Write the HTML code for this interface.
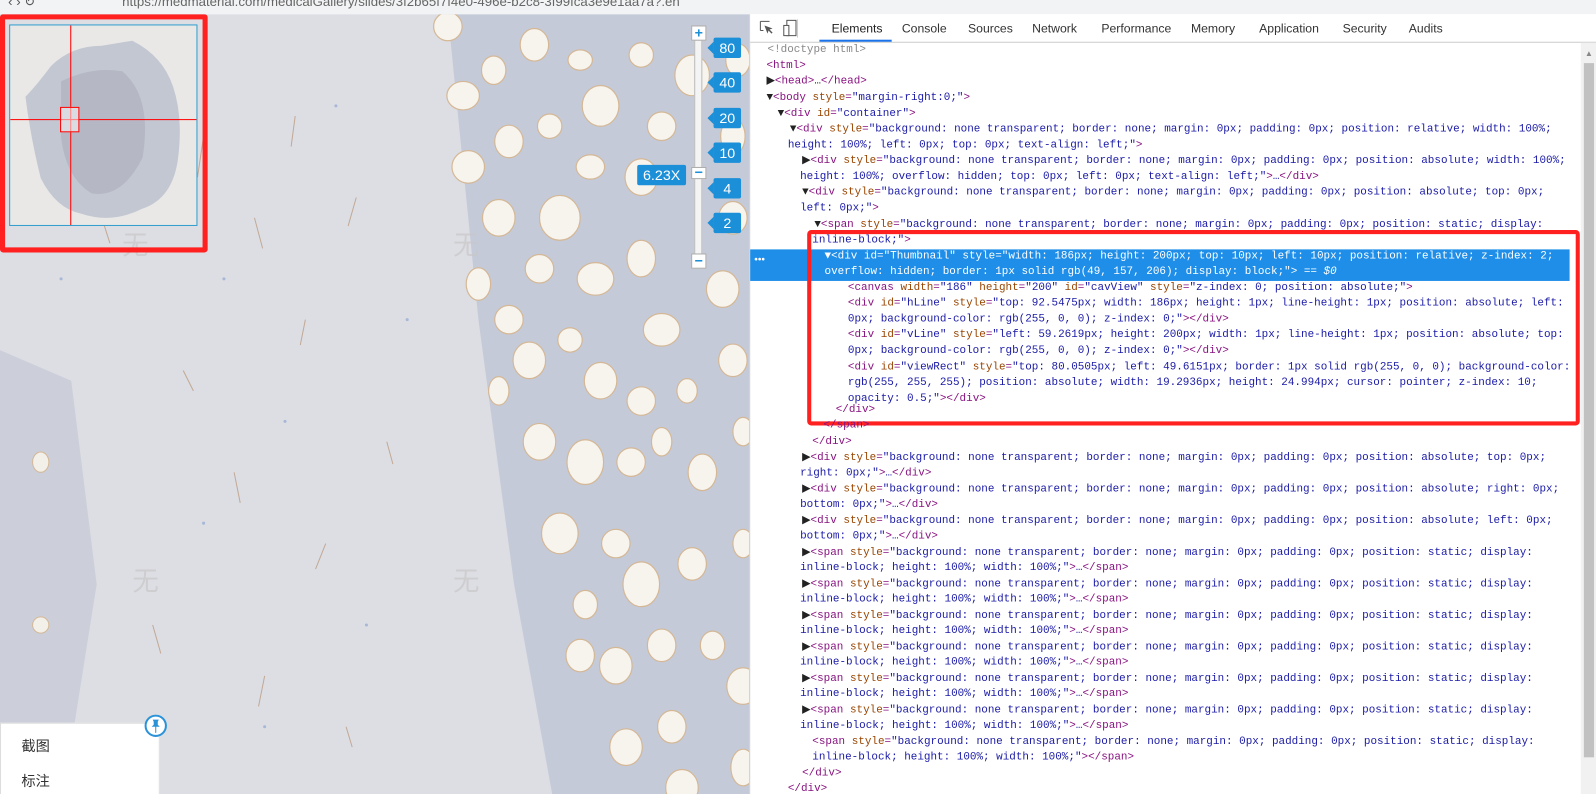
<!DOCTYPE html>
<html><head><meta charset="utf-8">
<style>
*{margin:0;padding:0;box-sizing:border-box}
html,body{width:1596px;height:794px;overflow:hidden}
body{position:relative;background:#fff;font-family:"Liberation Sans","Noto Sans CJK SC",sans-serif}
#wrap{position:absolute;left:0;top:0;width:1568px;height:780px;transform:scale(1.0179);transform-origin:0 0}
.top{position:absolute;left:0;top:0;width:1568px;height:14px;background:#f1f3f4;overflow:hidden}
.top span{position:absolute;top:-6px;font-size:13px;color:#555}
.view{position:absolute;left:0;top:14px;width:736px;height:780px;overflow:hidden;background:#e2e6ee}
.dev{position:absolute;left:736px;top:14px;width:832px;height:780px;background:#fff;border-left:1px solid #ccc}
.tb{position:absolute;left:0;top:0;width:832px;height:28px;border-bottom:1px solid #ccc;background:#fff}
.tab{position:absolute;top:7px;font-size:12px;color:#333}
.code{position:absolute;left:0;top:0;font-family:"Liberation Mono",monospace;font-size:10.75px;white-space:pre;color:#222}
.l{position:absolute;height:15px;line-height:15px}
.t{color:#881280}.a{color:#994500}.v{color:#1a1aa6}.p{color:#a894a6}.g{color:#888}
.sel{position:absolute;left:0;top:231px;width:805px;height:31px;background:#1e8ee9}
.lbl{position:absolute;background:#1b8fd8;color:#fff;font-size:14px;text-align:center;border-radius:2px;height:20px;line-height:20px}
.lbl:before{content:"";position:absolute;left:-6px;top:4px;border:6px solid transparent;border-left:0;border-right-color:#1b8fd8}
.btn{position:absolute;width:15px;height:15px;background:#fff;border:1px solid #aaa;color:#1b8fd8;font-size:14px;line-height:12px;text-align:center;font-weight:bold}
</style></head><body><div id="wrap">
<div class="top"><span style="left:8px">‹ › ↻</span><span style="left:120px;color:#666">https://medmaterial.com/medicalGallery/slides/3f2b65f7f4e0-496e-b2c8-3f99fca3e9e1aa7a?.en</span></div>
<div class="view">
<svg width="736" height="780" style="position:absolute;left:0;top:0">
<rect width="736" height="780" fill="#e0e5ee"/>
<path d="M440 0 L736 0 L736 780 L545 780 L505 560 L470 300 Z" fill="#c6cfe3"/>
<path d="M0 330 L70 360 L95 560 L60 780 L0 780Z" fill="#cdd4e4"/>
<rect x="0" y="0" width="736" height="780" fill="#c9ab8a" opacity=".1"/>
<g transform="translate(30,0)" fill="#f7f3ed" stroke="#d4b896" stroke-width="1.2">
<ellipse cx="410" cy="12" rx="14" ry="14"/><ellipse cx="425" cy="80" rx="16" ry="14"/>
<ellipse cx="455" cy="55" rx="12" ry="14"/><ellipse cx="495" cy="30" rx="14" ry="16"/><ellipse cx="540" cy="45" rx="12" ry="10"/>
<ellipse cx="560" cy="90" rx="18" ry="20"/><ellipse cx="510" cy="110" rx="12" ry="12"/><ellipse cx="600" cy="40" rx="12" ry="12"/>
<ellipse cx="650" cy="60" rx="17" ry="20"/><ellipse cx="620" cy="110" rx="14" ry="14"/><ellipse cx="695" cy="45" rx="12" ry="16"/>
<ellipse cx="470" cy="125" rx="14" ry="16"/><ellipse cx="430" cy="150" rx="16" ry="16"/>
<ellipse cx="550" cy="150" rx="14" ry="12"/><ellipse cx="600" cy="160" rx="16" ry="18"/><ellipse cx="690" cy="120" rx="12" ry="18"/>
<ellipse cx="460" cy="200" rx="16" ry="18"/><ellipse cx="520" cy="200" rx="20" ry="22"/><ellipse cx="500" cy="250" rx="14" ry="14"/>
<ellipse cx="440" cy="265" rx="12" ry="16"/><ellipse cx="470" cy="300" rx="14" ry="14"/>
<ellipse cx="555" cy="260" rx="18" ry="16"/><ellipse cx="600" cy="240" rx="14" ry="18"/><ellipse cx="620" cy="310" rx="18" ry="16"/>
<ellipse cx="680" cy="270" rx="16" ry="18"/><ellipse cx="690" cy="200" rx="14" ry="16"/><ellipse cx="460" cy="370" rx="10" ry="14"/>
<ellipse cx="490" cy="340" rx="16" ry="18"/><ellipse cx="530" cy="320" rx="12" ry="12"/><ellipse cx="560" cy="360" rx="16" ry="18"/>
<ellipse cx="600" cy="380" rx="14" ry="14"/><ellipse cx="645" cy="370" rx="10" ry="12"/><ellipse cx="690" cy="340" rx="14" ry="16"/>
<ellipse cx="500" cy="420" rx="16" ry="18"/><ellipse cx="545" cy="440" rx="18" ry="22"/><ellipse cx="590" cy="440" rx="14" ry="14"/>
<ellipse cx="620" cy="420" rx="10" ry="14"/><ellipse cx="660" cy="450" rx="14" ry="18"/><ellipse cx="700" cy="410" rx="10" ry="14"/>
<ellipse cx="520" cy="510" rx="18" ry="20"/><ellipse cx="575" cy="520" rx="14" ry="14"/><ellipse cx="600" cy="560" rx="18" ry="22"/>
<ellipse cx="650" cy="540" rx="14" ry="16"/><ellipse cx="700" cy="520" rx="10" ry="14"/><ellipse cx="545" cy="580" rx="12" ry="14"/>
<ellipse cx="540" cy="630" rx="14" ry="16"/><ellipse cx="575" cy="640" rx="16" ry="18"/><ellipse cx="620" cy="620" rx="14" ry="16"/>
<ellipse cx="670" cy="620" rx="12" ry="14"/><ellipse cx="700" cy="660" rx="16" ry="18"/><ellipse cx="585" cy="720" rx="16" ry="18"/>
<ellipse cx="630" cy="700" rx="14" ry="16"/><ellipse cx="640" cy="760" rx="16" ry="18"/><ellipse cx="700" cy="740" rx="12" ry="18"/>
<ellipse cx="600" cy="780" rx="14" ry="12"/>
</g>
<g fill="#f3efe9" stroke="#d4b896" stroke-width="1"><ellipse cx="40" cy="440" rx="8" ry="10"/><ellipse cx="40" cy="600" rx="8" ry="8"/></g>
<g fill="none" stroke="#b08560" stroke-width="1" opacity=".6">
<path d="M140 60 l10 30 M200 120 l-6 40 M250 200 l8 30 M300 300 l-5 25 M180 350 l10 20 M350 180 l-8 28 M230 450 l6 30 M320 520 l-10 25 M150 600 l8 28 M260 650 l-6 30 M380 420 l6 22 M100 200 l8 25 M290 100 l-4 30 M340 700 l6 20"/>
</g>
<g fill="#3f6fc0" opacity=".35">
<circle cx="120" cy="80" r="1.5"/><circle cx="170" cy="160" r="1.5"/><circle cx="220" cy="260" r="1.5"/><circle cx="330" cy="90" r="1.5"/><circle cx="280" cy="400" r="1.5"/><circle cx="200" cy="500" r="1.5"/><circle cx="360" cy="600" r="1.5"/><circle cx="400" cy="300" r="1.5"/><circle cx="260" cy="700" r="1.5"/><circle cx="60" cy="260" r="1.5"/>
</g>
<text x="120" y="236" font-size="26" fill="#c8c8c8" opacity=".7">无</text>
<text x="445" y="236" font-size="26" fill="#c8c8c8" opacity=".7">无</text>
<text x="130" y="566" font-size="26" fill="#c8c8c8" opacity=".7">无</text>
<text x="445" y="566" font-size="26" fill="#c8c8c8" opacity=".7">无</text>
</svg>
<div style="position:absolute;left:9px;top:10px;width:185px;height:198px;border:1px solid #319dce;background:#e9e8e6;overflow:hidden">
<svg width="185" height="198" style="position:absolute;left:0;top:0">
<path d="M40 40 Q60 20 90 20 L120 15 Q150 30 160 60 Q170 90 165 130 Q160 170 130 180 Q100 195 70 185 Q45 180 30 150 Q20 110 15 70 Q25 60 40 40Z" fill="#b4bccb" opacity=".75"/>
<path d="M50 55 Q80 40 110 45 Q140 70 130 130 Q110 170 80 165 Q55 150 50 110Z" fill="#a7aab5" opacity=".5"/>
</svg>
<div style="position:absolute;left:0;top:92px;width:185px;height:1px;background:red"></div>
<div style="position:absolute;left:59px;top:0;width:1px;height:198px;background:red"></div>
<div style="position:absolute;left:49px;top:80px;width:19px;height:25px;border:1px solid red;background:rgba(255,255,255,.5)"></div>
</div>
<div style="position:absolute;left:0;top:0;width:204px;height:234px;border:5px solid #ff2020;border-radius:3px"></div>
<div style="position:absolute;left:682px;top:18px;width:8px;height:224px;background:#f4f4f4;border:1px solid #bbb"></div>
<div class="btn" style="left:679px;top:11px">+</div>
<div class="btn" style="left:679px;top:235px">−</div>
<div class="btn" style="left:679px;top:150px;height:12px;line-height:8px">−</div>
<div class="lbl" style="left:701px;top:23px;width:27px">80</div>
<div class="lbl" style="left:701px;top:57px;width:27px">40</div>
<div class="lbl" style="left:701px;top:92px;width:27px">20</div>
<div class="lbl" style="left:701px;top:126px;width:27px">10</div>
<div class="lbl" style="left:701px;top:161px;width:27px">4</div>
<div class="lbl" style="left:701px;top:195px;width:27px">2</div>
<div style="position:absolute;left:626px;top:148px;width:48px;height:20px;line-height:20px;background:#1b8fd8;color:#fff;font-size:14px;text-align:center;border-radius:2px">6.23X</div>
<div style="position:absolute;left:0;top:696px;width:157px;height:90px;background:#fff;border:1px solid #ddd"></div>
<div style="position:absolute;left:21px;top:709px;font-size:14px;color:#333">截图</div>
<div style="position:absolute;left:21px;top:743px;font-size:14px;color:#333">标注</div>
<svg width="24" height="24" style="position:absolute;left:142px;top:688px"><circle cx="11" cy="11" r="10" fill="#fff" stroke="#2a93d8" stroke-width="2"/><path d="M8 5h6l-1 2v3l2 2H7l2-2V7zM10.5 12h1v6h-1z" fill="#2a93d8"/></svg>
</div>
<div class="dev">
<div class="tb">
<svg width="40" height="20" style="position:absolute;left:9px;top:5px"><path d="M1 2h9M1 2v9M1 11h3" stroke="#555" fill="none"/><path d="M5 6l8 3-3 1 3 3-1 1-3-3-1 3z" fill="#555"/><rect x="27" y="1" width="9" height="15" fill="none" stroke="#555"/><rect x="24" y="6" width="5" height="10" fill="#fff" stroke="#555"/></svg>
<div style="position:absolute;left:46px;top:5px;width:1px;height:18px;background:#ccc"></div>
<div class="tab" style="left:80px;color:#222">Elements</div>
<div style="position:absolute;left:68px;top:25px;width:71px;height:2px;background:#1a73e8"></div>
<div class="tab" style="left:149px">Console</div>
<div class="tab" style="left:214px">Sources</div>
<div class="tab" style="left:277px">Network</div>
<div class="tab" style="left:345px">Performance</div>
<div class="tab" style="left:433px">Memory</div>
<div class="tab" style="left:500px">Application</div>
<div class="tab" style="left:582px">Security</div>
<div class="tab" style="left:647px">Audits</div>
</div>
<div style="position:absolute;left:816px;top:28px;width:16px;height:752px;background:#f1f1f1"></div>
<div style="position:absolute;left:819px;top:48px;width:10px;height:682px;background:#c1c1c1"></div>
<div style="position:absolute;left:820px;top:34px;font-size:8px;color:#888">▲</div>
<div class="sel"></div>
<div style="position:absolute;left:4px;top:236px;color:#fff;font-size:10px">•••</div>
<div style="position:absolute;left:56px;top:212px;width:759px;height:192px;border:4px solid #ff2020;border-radius:4px"></div>
<div class="code">
<div class="l g" style="top:28px;left:17px">&lt;!doctype html&gt;</div>
<div class="l" style="top:44px;left:16px"><span class="t">&lt;html&gt;</span></div>
<div class="l" style="top:59px;left:16px">▶<span class="t">&lt;head&gt;</span>…<span class="t">&lt;/head&gt;</span></div>
<div class="l" style="top:75px;left:16px">▼<span class="t">&lt;body </span><span class="a">style</span><span class="t">=</span><span class="v">"margin-right:0;"</span><span class="t">&gt;</span></div>
<div class="l" style="top:91px;left:27px">▼<span class="t">&lt;div </span><span class="a">id</span><span class="t">=</span><span class="v">"container"</span><span class="t">&gt;</span></div>
<div class="l" style="top:106px;left:39px">▼<span class="t">&lt;div </span><span class="a">style</span><span class="t">=</span><span class="v">"background: none transparent; border: none; margin: 0px; padding: 0px; position: relative; width: 100%;</span></div>
<div class="l v" style="top:122px;left:37px">height: 100%; left: 0px; top: 0px; text-align: left;"<span class="t">&gt;</span></div>
<div class="l" style="top:137px;left:51px">▶<span class="t">&lt;div </span><span class="a">style</span><span class="t">=</span><span class="v">"background: none transparent; border: none; margin: 0px; padding: 0px; position: absolute; width: 100%;</span></div>
<div class="l v" style="top:153px;left:49px">height: 100%; overflow: hidden; top: 0px; left: 0px; text-align: left;"<span class="t">&gt;</span>…<span class="t">&lt;/div&gt;</span></div>
<div class="l" style="top:168px;left:51px">▼<span class="t">&lt;div </span><span class="a">style</span><span class="t">=</span><span class="v">"background: none transparent; border: none; margin: 0px; padding: 0px; position: absolute; top: 0px;</span></div>
<div class="l v" style="top:184px;left:49px">left: 0px;"<span class="t">&gt;</span></div>
<div class="l" style="top:200px;left:63px">▼<span class="t">&lt;span </span><span class="a">style</span><span class="t">=</span><span class="v">"background: none transparent; border: none; margin: 0px; padding: 0px; position: static; display:</span></div>
<div class="l v" style="top:215px;left:61px">inline-block;"<span class="t">&gt;</span></div>
<div class="l" style="top:231px;left:73px;color:#fff">▼&lt;div id="Thumbnail" style="width: 186px; height: 200px; top: 10px; left: 10px; position: relative; z-index: 2;</div>
<div class="l" style="top:246px;left:73px;color:#fff">overflow: hidden; border: 1px solid rgb(49, 157, 206); display: block;"&gt; == <i>$0</i></div>
<div class="l" style="top:262px;left:96px"><span class="t">&lt;canvas </span><span class="a">width</span><span class="t">=</span><span class="v">"186" </span><span class="a">height</span><span class="t">=</span><span class="v">"200" </span><span class="a">id</span><span class="t">=</span><span class="v">"cavView" </span><span class="a">style</span><span class="t">=</span><span class="v">"z-index: 0; position: absolute;"</span><span class="t">&gt;</span></div>
<div class="l" style="top:277px;left:96px"><span class="t">&lt;div </span><span class="a">id</span><span class="t">=</span><span class="v">"hLine" </span><span class="a">style</span><span class="t">=</span><span class="v">"top: 92.5475px; width: 186px; height: 1px; line-height: 1px; position: absolute; left:</span></div>
<div class="l v" style="top:293px;left:96px">0px; background-color: rgb(255, 0, 0); z-index: 0;"<span class="t">&gt;&lt;/div&gt;</span></div>
<div class="l" style="top:308px;left:96px"><span class="t">&lt;div </span><span class="a">id</span><span class="t">=</span><span class="v">"vLine" </span><span class="a">style</span><span class="t">=</span><span class="v">"left: 59.2619px; height: 200px; width: 1px; line-height: 1px; position: absolute; top:</span></div>
<div class="l v" style="top:324px;left:96px">0px; background-color: rgb(255, 0, 0); z-index: 0;"<span class="t">&gt;&lt;/div&gt;</span></div>
<div class="l" style="top:340px;left:96px"><span class="t">&lt;div </span><span class="a">id</span><span class="t">=</span><span class="v">"viewRect" </span><span class="a">style</span><span class="t">=</span><span class="v">"top: 80.0505px; left: 49.6151px; border: 1px solid rgb(255, 0, 0); background-color:</span></div>
<div class="l v" style="top:355px;left:96px">rgb(255, 255, 255); position: absolute; width: 19.2936px; height: 24.994px; cursor: pointer; z-index: 10;</div>
<div class="l v" style="top:371px;left:96px">opacity: 0.5;"<span class="t">&gt;&lt;/div&gt;</span></div>
<div class="l t" style="top:382px;left:84px">&lt;/div&gt;</div>
<div class="l t" style="top:397px;left:72px">&lt;/span&gt;</div>
<div class="l t" style="top:413px;left:61px">&lt;/div&gt;</div>
<div class="l" style="top:429px;left:51px">▶<span class="t">&lt;div </span><span class="a">style</span><span class="t">=</span><span class="v">"background: none transparent; border: none; margin: 0px; padding: 0px; position: absolute; top: 0px;</span></div>
<div class="l v" style="top:444px;left:49px">right: 0px;"<span class="t">&gt;</span>…<span class="t">&lt;/div&gt;</span></div>
<div class="l" style="top:460px;left:51px">▶<span class="t">&lt;div </span><span class="a">style</span><span class="t">=</span><span class="v">"background: none transparent; border: none; margin: 0px; padding: 0px; position: absolute; right: 0px;</span></div>
<div class="l v" style="top:475px;left:49px">bottom: 0px;"<span class="t">&gt;</span>…<span class="t">&lt;/div&gt;</span></div>
<div class="l" style="top:491px;left:51px">▶<span class="t">&lt;div </span><span class="a">style</span><span class="t">=</span><span class="v">"background: none transparent; border: none; margin: 0px; padding: 0px; position: absolute; left: 0px;</span></div>
<div class="l v" style="top:506px;left:49px">bottom: 0px;"<span class="t">&gt;</span>…<span class="t">&lt;/div&gt;</span></div>
<div class="l" style="top:522px;left:51px">▶<span class="t">&lt;span </span><span class="a">style</span><span class="t">=</span><span class="v">"background: none transparent; border: none; margin: 0px; padding: 0px; position: static; display:</span></div>
<div class="l v" style="top:537px;left:49px">inline-block; height: 100%; width: 100%;"<span class="t">&gt;</span>…<span class="t">&lt;/span&gt;</span></div>
<div class="l" style="top:553px;left:51px">▶<span class="t">&lt;span </span><span class="a">style</span><span class="t">=</span><span class="v">"background: none transparent; border: none; margin: 0px; padding: 0px; position: static; display:</span></div>
<div class="l v" style="top:568px;left:49px">inline-block; height: 100%; width: 100%;"<span class="t">&gt;</span>…<span class="t">&lt;/span&gt;</span></div>
<div class="l" style="top:584px;left:51px">▶<span class="t">&lt;span </span><span class="a">style</span><span class="t">=</span><span class="v">"background: none transparent; border: none; margin: 0px; padding: 0px; position: static; display:</span></div>
<div class="l v" style="top:599px;left:49px">inline-block; height: 100%; width: 100%;"<span class="t">&gt;</span>…<span class="t">&lt;/span&gt;</span></div>
<div class="l" style="top:615px;left:51px">▶<span class="t">&lt;span </span><span class="a">style</span><span class="t">=</span><span class="v">"background: none transparent; border: none; margin: 0px; padding: 0px; position: static; display:</span></div>
<div class="l v" style="top:630px;left:49px">inline-block; height: 100%; width: 100%;"<span class="t">&gt;</span>…<span class="t">&lt;/span&gt;</span></div>
<div class="l" style="top:646px;left:51px">▶<span class="t">&lt;span </span><span class="a">style</span><span class="t">=</span><span class="v">"background: none transparent; border: none; margin: 0px; padding: 0px; position: static; display:</span></div>
<div class="l v" style="top:661px;left:49px">inline-block; height: 100%; width: 100%;"<span class="t">&gt;</span>…<span class="t">&lt;/span&gt;</span></div>
<div class="l" style="top:677px;left:51px">▶<span class="t">&lt;span </span><span class="a">style</span><span class="t">=</span><span class="v">"background: none transparent; border: none; margin: 0px; padding: 0px; position: static; display:</span></div>
<div class="l v" style="top:692px;left:49px">inline-block; height: 100%; width: 100%;"<span class="t">&gt;</span>…<span class="t">&lt;/span&gt;</span></div>
<div class="l" style="top:708px;left:61px"><span class="t">&lt;span </span><span class="a">style</span><span class="t">=</span><span class="v">"background: none transparent; border: none; margin: 0px; padding: 0px; position: static; display:</span></div>
<div class="l v" style="top:723px;left:61px">inline-block; height: 100%; width: 100%;"<span class="t">&gt;&lt;/span&gt;</span></div>
<div class="l t" style="top:739px;left:51px">&lt;/div&gt;</div>
<div class="l t" style="top:754px;left:37px">&lt;/div&gt;</div>
</div>
</div>
</div></body></html>
